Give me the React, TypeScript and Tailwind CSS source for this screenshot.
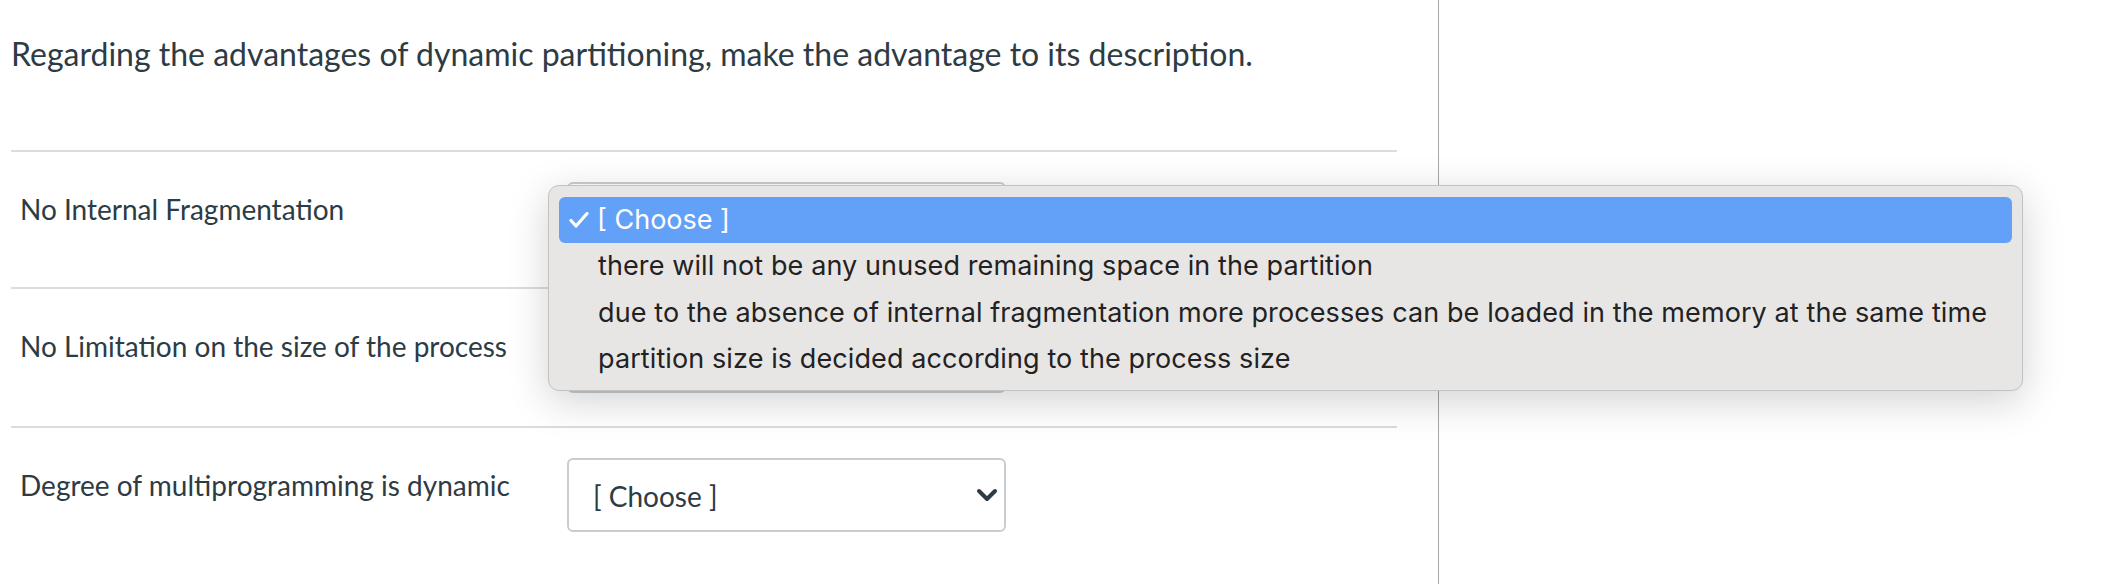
import React from "react";

function Chevron() {
  return (
    <svg width="22" height="14" viewBox="0 0 22 14" className="shrink-0">
      <path d="M3 3 L11 11 L19 3" fill="none" stroke="#2d3b45" strokeWidth="4" strokeLinecap="round" strokeLinejoin="round" />
    </svg>
  );
}

function Check() {
  return (
    <svg width="20" height="16" viewBox="0 0 20 16" className="shrink-0">
      <path d="M2 8.5 L7 14 L18 1.5" fill="none" stroke="#ffffff" strokeWidth="3.2" strokeLinecap="round" strokeLinejoin="round" />
    </svg>
  );
}

function Select() {
  return (
    <div className="w-[439px] h-[74px] border-2 border-[#c7cdd1] rounded-[6px] bg-white flex items-center justify-between pl-[24px] pr-[6px] text-[28px] text-[#2d3b45]">
      <span className="pt-[2px]">[ Choose ]</span>
      <Chevron />
    </div>
  );
}

function Row({ label, h }: { label: string; h: string }) {
  return (
    <div className={`flex border-t-2 border-[#dcdcdc] pl-[9px] ${h}`}>
      <div className="w-[547px] pt-[38px] leading-[38px] text-[28px] text-[#2d3b45]">{label}</div>
      <div className="pt-[30px]">
        <Select />
      </div>
    </div>
  );
}

export default function App() {
  const options = [
    "there will not be any unused remaining space in the partition",
    "due to the absence of internal fragmentation more processes can be loaded in the memory at the same time",
    "partition size is decided according to the process size",
  ];
  return (
    <div className="relative w-[2112px] h-[584px] bg-white overflow-hidden" style={{ fontFamily: "Lato, 'Noto Sans', sans-serif" }}>
      <div className="w-[1439px] h-[584px] border-r border-[#a6a6a6] pl-[11px]">
        <div className="w-[1386px]">
          <div className="h-[150px] pt-[34px] leading-[40px] text-[32px] text-[#2d3b45]">
            Regarding the advantages of dynamic partitioning, make the advantage to its description.
          </div>
          <Row label="No Internal Fragmentation" h="h-[137px]" />
          <Row label="No Limitation on the size of the process" h="h-[139px]" />
          <Row label="Degree of multiprogramming is dynamic" h="h-[157px]" />
        </div>
      </div>

      <div
        className="absolute left-[548px] top-[185px] w-[1475px] h-[206px] bg-[#e8e6e5] border border-[#c4c2c0] rounded-[11px] shadow-[0_10px_40px_rgba(0,0,0,0.18)] pt-[11px] pl-[10px] pr-[10px]"
        style={{ fontFamily: "Inter, 'Liberation Sans', sans-serif" }}
      >
        <div className="h-[46px] bg-[#63a1f8] rounded-[6px] flex items-center text-white text-[27px] pl-[10px]">
          <span className="w-[28px] flex items-center"><Check /></span>
          <span>[ Choose ]</span>
        </div>
        {options.map((o) => (
          <div key={o} className="h-[46.5px] flex items-center pl-[39px] text-[27px] tracking-[0.1px] text-[#222222]">
            {o}
          </div>
        ))}
      </div>
    </div>
  );
}
